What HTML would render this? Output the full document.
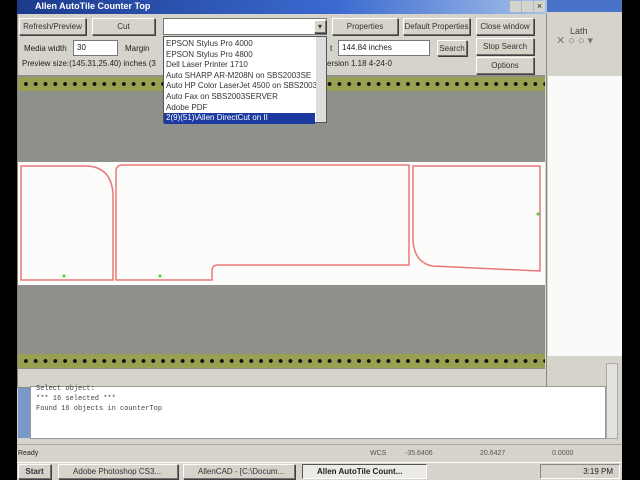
<!DOCTYPE html>
<html><head><meta charset="utf-8"><style>
*{box-sizing:border-box;margin:0;padding:0}
body{width:640px;height:480px;background:#000;position:relative;overflow:hidden;font-family:"Liberation Sans",sans-serif;font-size:8px;color:#222}
.a{position:absolute}
.btn{position:absolute;background:#d6d3cb;border:1px solid #fff;border-right-color:#707070;border-bottom-color:#707070;box-shadow:1px 1px 0 #404040;text-align:center;font-size:8px;line-height:15px;color:#333}
.dots{position:absolute;left:18px;width:527px;height:14px;background:#9aa052;background-image:radial-gradient(circle,#111 1.7px,transparent 2.2px);background-size:9.8px 14px;background-position:3px 0}
.li{height:10.6px;line-height:10.6px;padding-left:2px;font-size:8px;color:#333;white-space:nowrap;overflow:hidden}
</style></head><body>
<!-- right app -->
<div class="a" style="left:546px;top:0;width:76px;height:462px;background:#d6d3cb"></div>
<div class="a" style="left:546px;top:0;width:76px;height:12px;background:#4a72c8"></div>
<div class="a" style="left:570px;top:26px;font-size:9px;color:#444">Lath</div>
<div class="a" style="left:556px;top:34px;font-size:11px;color:#777;letter-spacing:3px">✕○○▾</div>
<div class="a" style="left:548px;top:76px;width:74px;height:280px;background:#fafaf8"></div>
<!-- main window -->
<div class="a" style="left:17px;top:0;width:530px;height:388px;background:#d6d3cb;border:1px solid #888"></div>
<div class="a" style="left:17px;top:0;width:530px;height:14px;background:linear-gradient(90deg,#1c3a8c,#3a6ad0 60%,#a6c0e8);color:#fff;font-weight:bold;font-size:9px;line-height:13px;padding-left:18px">Allen AutoTile Counter Top</div>
<div class="a" style="left:510px;top:1px;width:11px;height:11px;background:#d6d3cb"></div>
<div class="a" style="left:522px;top:1px;width:11px;height:11px;background:#d6d3cb"></div>
<div class="a" style="left:534px;top:1px;width:11px;height:11px;background:#d6d3cb;font-size:9px;line-height:11px;text-align:center">×</div>
<div class="btn" style="left:19px;top:18px;width:67px;height:17px">Refresh/Preview</div>
<div class="btn" style="left:92px;top:18px;width:63px;height:17px">Cut</div>
<div class="a" style="left:163px;top:18px;width:164px;height:17px;background:#fff;border:1px solid #777"></div>
<div class="btn" style="left:314px;top:20px;width:12px;height:13px;line-height:11px">▾</div>
<div class="btn" style="left:332px;top:18px;width:66px;height:17px">Properties</div>
<div class="btn" style="left:403px;top:18px;width:67px;height:17px">Default Properties</div>
<div class="btn" style="left:476px;top:18px;width:58px;height:17px">Close window</div>
<div class="a" style="left:24px;top:44px">Media width</div>
<div class="a" style="left:73px;top:40px;width:45px;height:16px;background:#fff;border:1px solid #777;padding-left:3px;line-height:14px">30</div>
<div class="a" style="left:125px;top:44px">Margin</div>
<div class="a" style="left:330px;top:44px">t</div>
<div class="a" style="left:338px;top:40px;width:92px;height:16px;background:#fff;border:1px solid #777;padding-left:3px;line-height:14px">144.84 inches</div>
<div class="btn" style="left:437px;top:40px;width:30px;height:16px">Search</div>
<div class="btn" style="left:476px;top:38px;width:58px;height:17px">Stop Search</div>
<div class="a" style="left:22px;top:59px">Preview size:(145.31,25.40) inches (3</div>
<div class="a" style="left:327px;top:59px">ersion 1.18 4-24-0</div>
<div class="btn" style="left:476px;top:57px;width:58px;height:17px">Options</div>
<!-- canvas -->
<div class="a" style="left:18px;top:75px;width:527px;height:300px;background:#8e908c"></div>
<div class="dots" style="top:77px"></div>
<div class="dots" style="top:354px"></div>
<div class="a" style="left:18px;top:369px;width:527px;height:17px;background:#d6d3cb"></div>
<div class="a" style="left:18px;top:162px;width:527px;height:123px;background:#fcfcfa"></div>
<svg class="a" style="left:0;top:0" width="640" height="480"><g fill="none" stroke="#e87878" stroke-width="1.5">
<path d="M21 166 H88 Q112 168 113 195 V280 H21 Z"/>
<path d="M116 280 V172 Q116 165 122 165 H409 V265 H218 Q212 265 212 271 V280 Z"/>
<path d="M413 166 H540 V271 L432 266 Q414 262 413 240 Z"/></g>
<g fill="#4c4"><circle cx="64" cy="276" r="1.5"/><circle cx="160" cy="276" r="1.5"/><circle cx="538" cy="214" r="1.5"/></g></svg>
<!-- dropdown list -->
<div class="a" style="left:163px;top:36px;width:164px;height:87px;background:#fff;border:1px solid #555;padding-top:2px">
<div class="li">EPSON Stylus Pro 4000</div><div class="li">EPSON Stylus Pro 4800</div><div class="li">Dell Laser Printer 1710</div><div class="li">Auto SHARP AR-M208N on SBS2003SE</div><div class="li">Auto HP Color LaserJet 4500 on SBS2003</div><div class="li">Auto Fax on SBS2003SERVER</div><div class="li">Adobe PDF</div><div class="li" style="background:#1a3aa0;color:#fff;width:151px">2(9)(51)\Allen DirectCut on II</div>
</div>
<div class="a" style="left:316px;top:37px;width:10px;height:85px;background:#ddd"></div>
<!-- command area -->
<div class="a" style="left:17px;top:388px;width:605px;height:56px;background:#d6d3cb"></div>
<div class="a" style="left:30px;top:386px;width:576px;height:53px;background:#fff;border:1px solid #999"></div>
<div class="a" style="left:18px;top:388px;width:12px;height:50px;background:#7a98c8"></div>
<div class="a" style="left:606px;top:363px;width:12px;height:76px;background:#e4e2dc;border:1px solid #aaa"></div>
<div class="a" style="left:36px;top:384px;font-family:'Liberation Mono',monospace;font-size:7px;line-height:10px;color:#444">Select object:<br>*** 16 selected ***<br>Found 16 objects in counterTop</div>
<!-- status bar -->
<div class="a" style="left:17px;top:444px;width:605px;height:18px;background:#d6d3cb;border-top:1px solid #aaa"></div>
<div class="a" style="left:18px;top:450px;font-size:7px">Ready</div>
<div class="a" style="left:370px;top:450px;font-size:7px;color:#555">WCS</div>
<div class="a" style="left:405px;top:450px;font-size:7px;color:#555">-35.6406</div>
<div class="a" style="left:480px;top:450px;font-size:7px;color:#555">20.6427</div>
<div class="a" style="left:552px;top:450px;font-size:7px;color:#555">0.0000</div>
<!-- taskbar -->
<div class="a" style="left:17px;top:462px;width:605px;height:18px;background:#d6d3cb;border-top:1px solid #fff"></div>
<div class="btn" style="left:18px;top:464px;width:33px;height:15px;font-weight:bold;line-height:13px">Start</div>
<div class="btn" style="left:58px;top:464px;width:120px;height:15px;line-height:13px;text-align:left;padding-left:14px">Adobe Photoshop CS3...</div>
<div class="btn" style="left:183px;top:464px;width:112px;height:15px;line-height:13px;text-align:left;padding-left:14px">AllenCAD - [C:\Docum...</div>
<div class="a" style="left:302px;top:464px;width:125px;height:15px;background:#eceae4;border:1px solid #555;border-right-color:#fff;border-bottom-color:#fff;font-weight:bold;line-height:13px;padding-left:14px;font-size:8px">Allen AutoTile Count...</div>
<div class="a" style="left:540px;top:464px;width:80px;height:15px;border:1px solid #888;border-right-color:#fff;border-bottom-color:#fff;font-size:8px;line-height:13px;text-align:right;padding-right:6px">3:19 PM</div>
</body></html>
